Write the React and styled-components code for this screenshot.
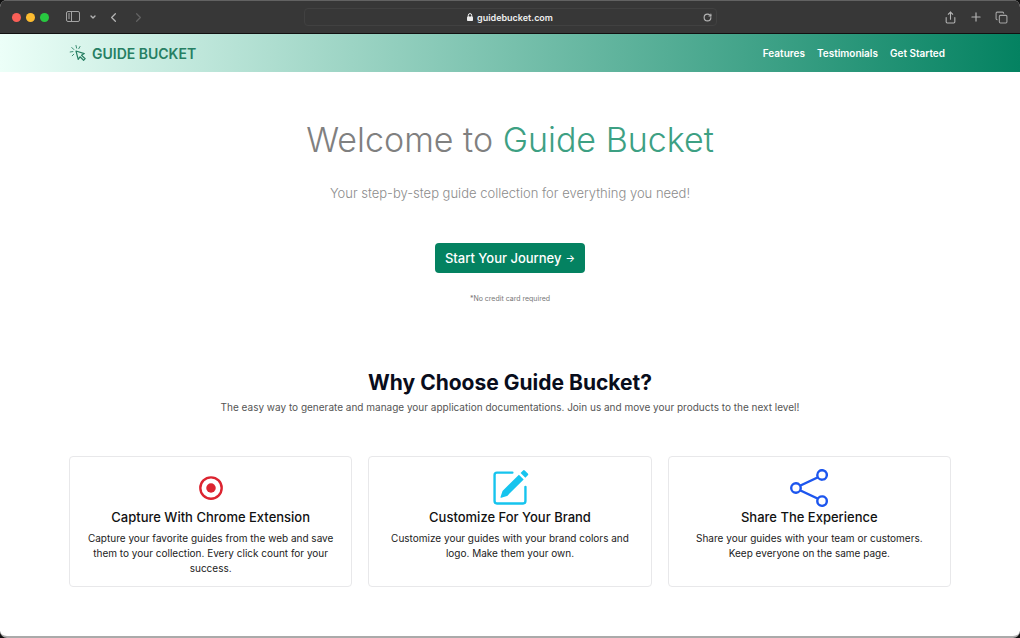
import styled, { createGlobalStyle } from 'styled-components';
import { BsPencilSquare, BsRecord2, BsShare } from 'react-icons/bs';
import { ChevronDown, ChevronLeft, ChevronRight, Copy, Plus, RotateCw, Share } from 'lucide-react';

const features = [
  {
    title: 'Capture With Chrome Extension',
    text: 'Capture your favorite guides from the web and save them to your collection. Every click count for your success.',
    color: '#dc2430',
    icon: BsRecord2,
  },
  {
    title: 'Customize For Your Brand',
    text: 'Customize your guides with your brand colors and logo. Make them your own.',
    color: '#16c4ee',
    icon: BsPencilSquare,
  },
  {
    title: 'Share The Experience',
    text: 'Share your guides with your team or customers. Keep everyone on the same page.',
    color: '#1d56ee',
    icon: BsShare,
  },
];

const SidebarIcon = () => (
  <svg width="14" height="12" viewBox="0 0 14 12" fill="none" stroke="#a4a4a4">
    <rect x="0.5" y="0.5" width="13" height="10" rx="1.5" />
    <path d="M5.5 1v9M2 3h2M2 5h2M2 7h2" />
  </svg>
);

const LockIcon = () => (
  <svg width="6" height="8" viewBox="0 0 6 8" fill="none">
    <rect x="0" y="3.5" width="6" height="4.5" rx="0.8" fill="#eee" />
    <path d="M1.3 4V2.3a1.7 1.7 0 0 1 3.4 0V4" stroke="#eee" />
  </svg>
);

const ClickIcon = () => (
  <svg width="18" height="18" viewBox="0 0 18 18" fill="none" stroke="#277f63" strokeLinecap="round" strokeLinejoin="round">
    <path d="M7 1.5l.6 2.6M11 2.5L9.8 4.6M2.8 3.5l2 2M1.2 8l2.7-.4M3.2 11.8l1.6-1.6" strokeWidth="0.9" />
    <path d="M7 7l8.3 2.6-2.8 1.7 3.7 3.4-1.6 1.6-3.6-3.5-1.8 2.6z" strokeWidth="1.2" />
  </svg>
);

const BrowserBar = () => (
  <Toolbar>
    <ToolGroup>
      <Lights>
        <Light $color="#f95f57" />
        <Light $color="#fcbc30" />
        <Light $color="#28c840" />
      </Lights>
      <ToolButton aria-label="Sidebar"><SidebarIcon /></ToolButton>
      <ToolButton aria-label="Tab groups"><ChevronDown size={8} strokeWidth={4} /></ToolButton>
      <NavButtons>
        <ToolButton aria-label="Back"><ChevronLeft size={15} /></ToolButton>
        <ToolButton aria-label="Forward" disabled><ChevronRight size={15} /></ToolButton>
      </NavButtons>
    </ToolGroup>
    <AddressBar>
      <Address><LockIcon />guidebucket.com</Address>
      <ToolButton aria-label="Reload"><RotateCw size={9} strokeWidth={3} /></ToolButton>
    </AddressBar>
    <ToolGroup $end>
      <ToolButton aria-label="Share"><Share size={13} /></ToolButton>
      <ToolButton aria-label="New tab"><Plus size={14} /></ToolButton>
      <ToolButton aria-label="Tab overview"><TabsIcon size={13} /></ToolButton>
    </ToolGroup>
  </Toolbar>
);

const App = () => {
  return (
    <Desktop>
      <GlobalStyle />
      <Window>
        <BrowserBar />
        <Header>
          <Brand href="#">
            <ClickIcon />
            GUIDE BUCKET
          </Brand>
          <Nav>
            <NavLink href="#features">Features</NavLink>
            <NavLink href="#testimonials">Testimonials</NavLink>
            <NavLink href="#start">Get Started</NavLink>
          </Nav>
        </Header>
        <Main>
          <Hero>
            <Title>Welcome to <Accent>Guide Bucket</Accent></Title>
            <Tagline>Your step-by-step guide collection for everything you need!</Tagline>
            <StartButton type="button">Start Your Journey <Arrow>→</Arrow></StartButton>
            <Note>*No credit card required</Note>
          </Hero>
          <Why id="features">
            <WhyTitle>Why Choose Guide Bucket?</WhyTitle>
            <WhyText>
              The easy way to generate and manage your application documentations. Join us and move your products to the next level!
            </WhyText>
            <Cards>
              {features.map(({ title, text, color, icon: Icon }) => (
                <Card key={title}>
                  <CardIcon $color={color}><Icon /></CardIcon>
                  <CardTitle>{title}</CardTitle>
                  <CardText>{text}</CardText>
                </Card>
              ))}
            </Cards>
          </Why>
        </Main>
      </Window>
    </Desktop>
  );
};

const GlobalStyle = createGlobalStyle`
  * {
    box-sizing: border-box;
  }

  body {
    margin: 0;
    font-family: Inter, 'Liberation Sans', sans-serif;
  }

  h1, h2, h3, p {
    margin: 0;
  }
`;

const Desktop = styled.div`
  display: flex;
  min-height: 100vh;
  background-color: #111;
`;

const Window = styled.div`
  display: flex;
  flex-direction: column;
  flex: 1;
  overflow: hidden;
  border-bottom: 2px solid #aaa;
  border-radius: 7px;
  background-color: #fff;
`;

const Toolbar = styled.div`
  display: grid;
  grid-template-columns: 1fr minmax(0, 413px) 1fr;
  align-items: center;
  height: 34px;
  border-top: 1px solid #626262;
  border-bottom: 1px solid #111;
  background-color: #373737;
`;

const ToolGroup = styled.div`
  display: flex;
  align-items: center;
  justify-content: ${({ $end }) => ($end ? 'flex-end' : 'flex-start')};
  gap: ${({ $end }) => ($end ? '12px' : '9px')};
  padding: 0 12px;
`;

const Lights = styled.div`
  display: flex;
  gap: 5px;
  margin-right: 8px;
`;

const Light = styled.span`
  width: 9px;
  height: 9px;
  border-radius: 50%;
  background-color: ${({ $color }) => $color};
`;

const NavButtons = styled.div`
  display: flex;
  gap: 10px;
`;

const ToolButton = styled.button`
  display: flex;
  padding: 0;
  border: none;
  background: none;
  color: #b4b4b4;

  &:disabled {
    color: #626262;
  }
`;

const TabsIcon = styled(Copy)`
  color: #a4a4a4;
`;

const AddressBar = styled.div`
  display: flex;
  align-items: center;
  height: 18px;
  padding: 0 4px 0 13px;
  border: 1px solid #414141;
  border-radius: 4px;
`;

const Address = styled.span`
  display: flex;
  align-items: center;
  justify-content: center;
  flex: 1;
  gap: 4px;
  color: #eee;
  font-size: 9px;
  font-weight: 600;
`;

const Header = styled.header`
  display: flex;
  align-items: center;
  justify-content: space-between;
  height: 38px;
  padding: 0 75px 0 69px;
  background: linear-gradient(to right, #ecfff8, #048261);
`;

const Brand = styled.a`
  display: flex;
  align-items: center;
  gap: 5px;
  color: #277f63;
  font-size: 14px;
  font-weight: 600;
  text-decoration: none;
`;

const Nav = styled.nav`
  display: flex;
  gap: 12px;
`;

const NavLink = styled.a`
  color: #fff;
  font-size: 10px;
  font-weight: 600;
  text-decoration: none;
`;

const Main = styled.main`
  padding: 0 69px 48px;
  text-align: center;
`;

const Hero = styled.section`
  display: flex;
  flex-direction: column;
  align-items: center;
  padding-top: 46px;
`;

const Title = styled.h1`
  color: #808080;
  font-size: 34px;
  font-weight: 300;
  line-height: 44px;
`;

const Accent = styled.span`
  color: #3da083;
`;

const Tagline = styled.p`
  margin-top: 21px;
  color: #8c8c8c;
  font-size: 13px;
  font-weight: 300;
  line-height: 20px;
`;

const StartButton = styled.button`
  display: flex;
  align-items: center;
  gap: 4px;
  height: 30px;
  margin-top: 40px;
  padding: 0 10px;
  border: none;
  border-radius: 4px;
  background-color: #048261;
  color: #fff;
  font: 500 13px Inter, 'Liberation Sans', sans-serif;
`;

const Arrow = styled.span`
  font-size: 10px;
`;

const Note = styled.p`
  margin-top: 21px;
  color: #777;
  font-size: 7px;
  line-height: 10px;
`;

const Why = styled.section`
  padding-top: 65px;
`;

const WhyTitle = styled.h2`
  color: #090d1c;
  font-size: 21px;
  font-weight: 700;
  line-height: 28px;
`;

const WhyText = styled.p`
  margin-top: 3px;
  color: #555;
  font-size: 10px;
  line-height: 15px;
`;

const Cards = styled.div`
  display: grid;
  grid-template-columns: repeat(3, 1fr);
  gap: 16px;
  margin-top: 41px;
`;

const Card = styled.article`
  padding: 12px 16px 10px;
  border: 1px solid #e8e8ea;
  border-radius: 4px;
`;

const CardIcon = styled.div`
  display: flex;
  justify-content: center;
  color: ${({ $color }) => $color};
  font-size: 38px;
`;

const CardTitle = styled.h3`
  color: #111;
  font-size: 13px;
  font-weight: 500;
  line-height: 21px;
`;

const CardText = styled.p`
  margin-top: 3px;
  color: #222;
  font-size: 10px;
  line-height: 15px;
`;

export default App;
